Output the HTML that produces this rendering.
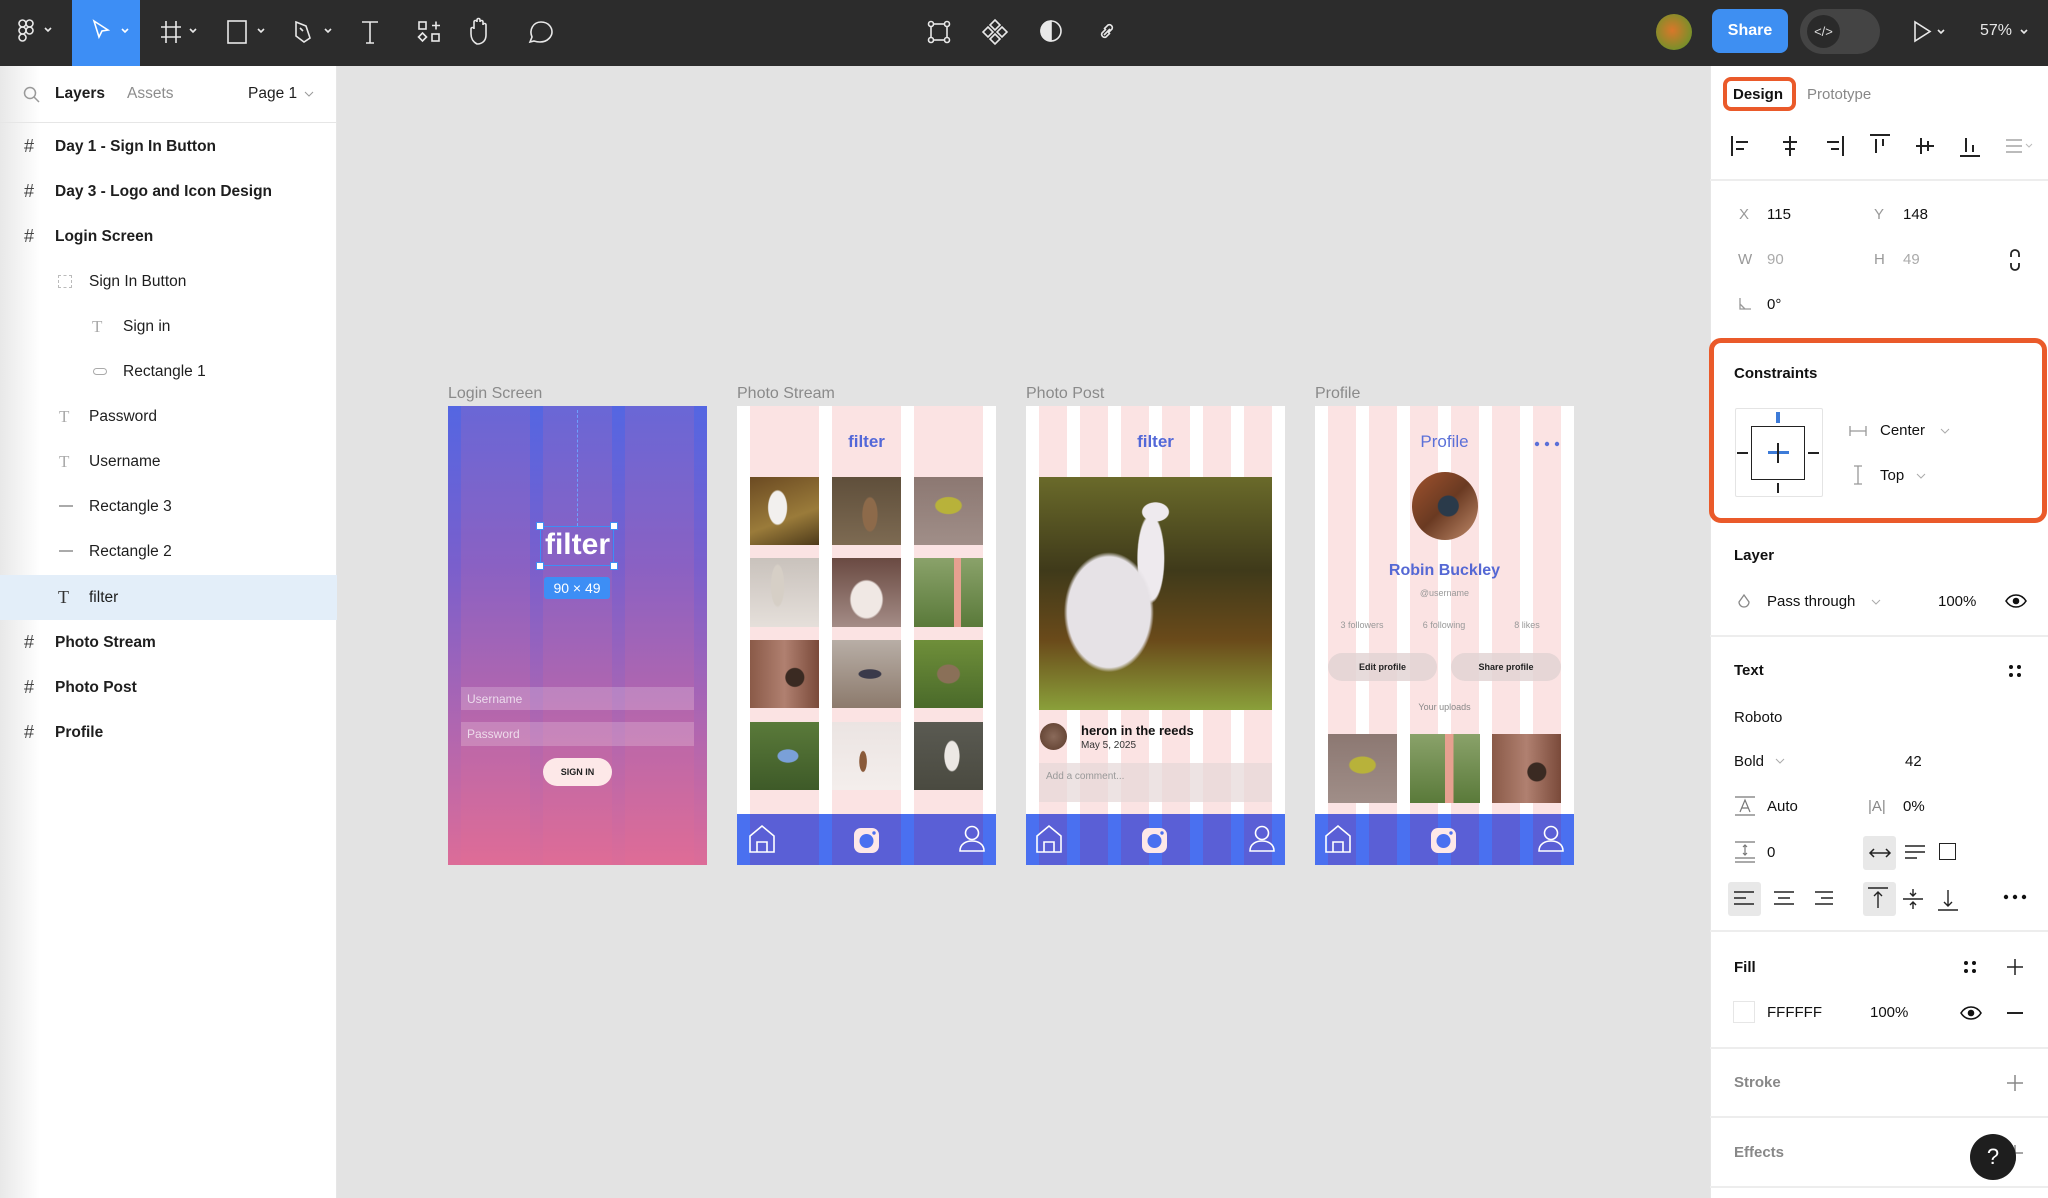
<!DOCTYPE html>
<html><head><meta charset="utf-8"><style>
*{box-sizing:border-box;margin:0;padding:0}
body{width:2048px;height:1198px;overflow:hidden;background:#e3e3e3;font-family:"Liberation Sans",sans-serif;position:relative}
.a{position:absolute}
.tb{left:0;top:0;width:2048px;height:66px;background:#2c2c2c}
.lp{left:0;top:66px;width:337px;height:1132px;background:#fff;border-right:1px solid #e6e6e6}
.lp .sh{left:0;top:0;width:40px;height:1132px;background:linear-gradient(90deg,#e8e8e8,#fff)}
.row{position:absolute;left:0;width:337px;height:45px;font-size:15.5px;color:#1e1e1e;line-height:45px}
.row b{font-weight:700}
.rp{left:1710px;top:66px;width:338px;height:1132px;background:#fff;border-left:1px solid #e6e6e6}
.t{position:absolute;white-space:nowrap;line-height:1}
.div{position:absolute;left:1710px;width:338px;height:2px;background:#ededed}
.flabel{position:absolute;top:385px;font-size:16px;color:#8a8a8a}
.frame{position:absolute;top:406px;width:259px;height:459px;background:#fff;overflow:hidden}
.col{position:absolute;top:0;height:459px;background:#fbe3e3}
.nav{position:absolute;left:0;top:408px;width:259px;height:51px;background:#4a70f0}
.ncol{position:absolute;top:0;height:51px;background:#5a5fd6}
.ph{position:absolute;overflow:hidden}
.fl{position:absolute;font-weight:700;color:#5368d8;font-size:17px}
</style></head><body>

<div class="a tb"></div>
<div class="a" style="left:72px;top:0;width:68px;height:66px;background:#3d8ef5"></div>
<svg class="a" style="left:0;top:0" width="2048" height="66" fill="none" stroke="#e8e8e8" stroke-width="1.6">
 <g transform="translate(19,20)"><rect x="0" y="0" width="7" height="7" rx="3.5"/><rect x="7" y="0" width="7" height="7" rx="3.5"/><rect x="0" y="7" width="7" height="7" rx="3.5"/><circle cx="10.5" cy="10.5" r="3.5"/><rect x="0" y="14" width="7" height="7" rx="3.5"/></g>
 <path d="M45 28l3 3 3-3"/>
 <path d="M94 21l14 9-6 1-3 6z" stroke="#fff"/><path d="M122 29l3 3 3-3" stroke="#fff"/>
 <path d="M166 21v22M176 21v22M161 27h20M161 37h20"/><path d="M190 29l3 3 3-3"/>
 <rect x="228" y="21" width="18" height="22"/><path d="M258 29l3 3 3-3"/>
 <path d="M296 22l10 4 4 12-6 4-8-6z M300 28l3 3"/><path d="M325 29l3 3 3-3"/>
 <path d="M362 22h16M370 22v21M366 43h8"/>
 <rect x="419" y="22" width="7" height="7"/><path d="M432 25.5h8M436 21.5v8"/><path d="M422.5 33l4 4-4 4-4-4z"/><rect x="432" y="34" width="7" height="7"/>
 <path d="M477 44c-4-2-6-6-6-10v-5c0-2 3-2 3 0v-7c0-2 3-2 3 0v-2c0-2 3-2 3 0v2c0-2 3-2 3 0v3c0-2 3-2 3 0v10c0 5-3 9-9 9z"/>
 <path d="M530 42l2-5c-3-7 1-15 9-15s11 6 11 10-4 10-12 10c-3 0-6-1-6-1z"/>
 <rect x="931" y="24" width="16" height="16"/><circle cx="931" cy="24" r="2.5" fill="#2c2c2c"/><circle cx="947" cy="24" r="2.5" fill="#2c2c2c"/><circle cx="931" cy="40" r="2.5" fill="#2c2c2c"/><circle cx="947" cy="40" r="2.5" fill="#2c2c2c"/>
 <path d="M995 20l5 5-5 5-5-5zM988 27l5 5-5 5-5-5zM1002 27l5 5-5 5-5-5zM995 34l5 5-5 5-5-5z"/>
 <circle cx="1051" cy="31" r="10"/><path d="M1051 21a10 10 0 0 0 0 20z" fill="#e8e8e8"/>
 <path d="M1106 29l-4 4a3 3 0 0 0 4 4l4-4M1108 33l4-4a3 3 0 0 0-4-4l-4 4M1104 35l6-6"/>
 <path d="M1915 22v19l15-9.5z"/><path d="M1938 30l3 3 3-3"/>
 <path d="M2021 30l3 3 3-3"/>
</svg>
<div class="a" style="left:1656px;top:14px;width:36px;height:36px;border-radius:50%;background:radial-gradient(circle at 45% 45%,#d9772a,#7a8f2a 70%,#3d5a1e)"></div>
<div class="a" style="left:1712px;top:9px;width:76px;height:44px;border-radius:8px;background:#3e8ff2;color:#fff;font-weight:700;font-size:16px;line-height:44px;text-align:center">Share</div>
<div class="a" style="left:1800px;top:9px;width:80px;height:45px;border-radius:23px;background:#444"></div>
<div class="a" style="left:1807px;top:15px;width:33px;height:33px;border-radius:50%;background:#2a2a2a;color:#ddd;font-size:13px;line-height:33px;text-align:center">&lt;/&gt;</div>
<div class="t" style="left:1980px;top:23px;color:#e8e8e8;font-size:16px">57%</div>

<div class="a lp"><div class="a sh"></div></div>
<svg class="a" style="left:23px;top:86px" width="18" height="18" fill="none" stroke="#999" stroke-width="1.5"><circle cx="7" cy="7" r="5.5"/><path d="M11 11l5 5"/></svg>
<div class="t" style="left:55px;top:86px;font-size:15.5px;font-weight:700;color:#1e1e1e">Layers</div>
<div class="t" style="left:127px;top:86px;font-size:15.5px;color:#8c8c8c">Assets</div>
<div class="t" style="left:248px;top:86px;font-size:15.5px;color:#1e1e1e">Page 1</div>
<svg class="a" style="left:304px;top:90px" width="10" height="8" fill="none" stroke="#999"><path d="M1 2l4 4 4-4"/></svg>
<div class="a" style="left:0;top:122px;width:337px;height:1px;background:#e6e6e6"></div>

<div class="a" style="left:0;top:575px;width:337px;height:45px;background:#e3eef9"></div>
<div class="row" style="top:124px"><span class="a" style="left:24px;color:#444;font-size:18px">#</span><b class="a" style="left:55px">Day 1 - Sign In Button</b></div>
<div class="row" style="top:169px"><span class="a" style="left:24px;color:#444;font-size:18px">#</span><b class="a" style="left:55px">Day 3 - Logo and Icon Design</b></div>
<div class="row" style="top:214px"><span class="a" style="left:24px;color:#444;font-size:18px">#</span><b class="a" style="left:55px">Login Screen</b></div>
<div class="row" style="top:259px"><span class="a" style="left:58px;top:16px;width:14px;height:13px;border:1px dashed #bbb"></span><span class="a" style="left:89px">Sign In Button</span></div>
<div class="row" style="top:304px"><span class="a" style="left:92px;color:#aaa;font-family:'Liberation Serif',serif;font-size:17px">T</span><span class="a" style="left:123px">Sign in</span></div>
<div class="row" style="top:349px"><span class="a" style="left:93px;top:19px;width:14px;height:7px;border:1.5px solid #aaa;border-radius:4px"></span><span class="a" style="left:123px">Rectangle 1</span></div>
<div class="row" style="top:394px"><span class="a" style="left:59px;color:#aaa;font-family:'Liberation Serif',serif;font-size:17px">T</span><span class="a" style="left:89px">Password</span></div>
<div class="row" style="top:439px"><span class="a" style="left:59px;color:#aaa;font-family:'Liberation Serif',serif;font-size:17px">T</span><span class="a" style="left:89px">Username</span></div>
<div class="row" style="top:484px"><span class="a" style="left:59px;top:21px;width:14px;height:2px;background:#aaa"></span><span class="a" style="left:89px">Rectangle 3</span></div>
<div class="row" style="top:529px"><span class="a" style="left:59px;top:21px;width:14px;height:2px;background:#aaa"></span><span class="a" style="left:89px">Rectangle 2</span></div>
<div class="row" style="top:575px"><span class="a" style="left:58px;color:#333;font-family:'Liberation Serif',serif;font-size:18px">T</span><span class="a" style="left:89px">filter</span></div>
<div class="row" style="top:620px"><span class="a" style="left:24px;color:#444;font-size:18px">#</span><b class="a" style="left:55px">Photo Stream</b></div>
<div class="row" style="top:665px"><span class="a" style="left:24px;color:#444;font-size:18px">#</span><b class="a" style="left:55px">Photo Post</b></div>
<div class="row" style="top:710px"><span class="a" style="left:24px;color:#444;font-size:18px">#</span><b class="a" style="left:55px">Profile</b></div>

<div class="flabel" style="left:448px">Login Screen</div>
<div class="flabel" style="left:737px">Photo Stream</div>
<div class="flabel" style="left:1026px">Photo Post</div>
<div class="flabel" style="left:1315px">Profile</div>

<div class="frame" style="left:448px;background:linear-gradient(180deg,#5466e2 0%,#7a5fcc 35%,#b066b0 70%,#dc6c98 100%)">
 <div class="col" style="left:13px;width:69px;background:rgba(240,110,140,.14)"></div>
 <div class="col" style="left:95px;width:69px;background:rgba(240,110,140,.14)"></div>
 <div class="col" style="left:177px;width:69px;background:rgba(240,110,140,.14)"></div>
 <div class="a" style="left:129px;top:4px;height:116px;border-left:1px dashed #6ea0ff"></div>
 <div class="a" style="left:92px;top:120px;width:74px;height:40px;border:1.5px solid #3d8ef5"></div>
 <div class="a" style="left:88px;top:116px;width:8px;height:8px;background:#fff;border:1px solid #3d8ef5"></div>
 <div class="a" style="left:162px;top:116px;width:8px;height:8px;background:#fff;border:1px solid #3d8ef5"></div>
 <div class="a" style="left:88px;top:156px;width:8px;height:8px;background:#fff;border:1px solid #3d8ef5"></div>
 <div class="a" style="left:162px;top:156px;width:8px;height:8px;background:#fff;border:1px solid #3d8ef5"></div>
 <div class="t" style="left:0;width:259px;text-align:center;top:124px;color:#fff;font-weight:700;font-size:30px">filter</div>
 <div class="a" style="left:96px;top:171px;width:66px;height:22px;background:#3d8ef5;border-radius:3px;color:#fff;font-size:14px;line-height:22px;text-align:center">90 × 49</div>
 <div class="a" style="left:13px;top:281px;width:233px;height:23px;background:rgba(255,255,255,.2)"></div>
 <div class="t" style="left:19px;top:287px;color:rgba(255,255,255,.7);font-size:12px">Username</div>
 <div class="a" style="left:13px;top:316px;width:233px;height:24px;background:rgba(255,255,255,.2)"></div>
 <div class="t" style="left:19px;top:322px;color:rgba(255,255,255,.7);font-size:12px">Password</div>
 <div class="a" style="left:95px;top:352px;width:69px;height:28px;border-radius:14px;background:#fde8e8;color:#222;font-weight:700;font-size:9px;line-height:28px;text-align:center">SIGN IN</div>
</div>

<div class="frame" style="left:737px">
 <div class="col" style="left:13px;width:69px"></div><div class="col" style="left:95px;width:69px"></div><div class="col" style="left:177px;width:69px"></div>
 <div class="fl" style="left:0;width:259px;text-align:center;top:26px">filter</div>
 <div class="ph" style="left:13px;top:71px;width:69px;height:68px;background:radial-gradient(ellipse 10px 18px at 40% 45%,#f2f0ee 90%,transparent),linear-gradient(160deg,#6b4a22,#9a7b3a 60%,#4d3a1a)"></div>
 <div class="ph" style="left:95px;top:71px;width:69px;height:68px;background:radial-gradient(ellipse 8px 18px at 55% 55%,#8d6a4a 90%,transparent),linear-gradient(#5f4f3b,#7d6a52)"></div>
 <div class="ph" style="left:177px;top:71px;width:69px;height:68px;background:radial-gradient(ellipse 14px 9px at 50% 42%,#b8b23a 90%,transparent),linear-gradient(#8c7872,#a08e88)"></div>
 <div class="ph" style="left:13px;top:152px;width:69px;height:69px;background:radial-gradient(ellipse 7px 22px at 40% 40%,#d6cfc6 90%,transparent),linear-gradient(#c9c2bc,#e5dfda)"></div>
 <div class="ph" style="left:95px;top:152px;width:69px;height:69px;background:radial-gradient(ellipse 17px 20px at 50% 60%,#f0e8e4 90%,transparent),linear-gradient(#6a4a42,#a48c86)"></div>
 <div class="ph" style="left:177px;top:152px;width:69px;height:69px;background:linear-gradient(90deg,transparent 58%,#e6a090 58%,#e6a090 68%,transparent 68%),linear-gradient(#8aa26a,#5a7a3a)"></div>
 <div class="ph" style="left:13px;top:234px;width:69px;height:68px;background:radial-gradient(circle at 65% 55%,#3a2a22 9px,transparent 10px),linear-gradient(90deg,#8a5a48,#b08070,#7a4a3a)"></div>
 <div class="ph" style="left:95px;top:234px;width:69px;height:68px;background:radial-gradient(ellipse 12px 5px at 55% 50%,#3a3a4a 90%,transparent),linear-gradient(#b8aea6,#8c7a6c)"></div>
 <div class="ph" style="left:177px;top:234px;width:69px;height:68px;background:radial-gradient(ellipse 12px 10px at 50% 50%,#8a7058 90%,transparent),linear-gradient(#6f8f3a,#4a6a2a)"></div>
 <div class="ph" style="left:13px;top:316px;width:69px;height:68px;background:radial-gradient(ellipse 11px 7px at 55% 50%,#7aa0d8 90%,transparent),linear-gradient(#5a7a3a,#3e5a28)"></div>
 <div class="ph" style="left:95px;top:316px;width:69px;height:68px;background:radial-gradient(ellipse 4px 11px at 45% 58%,#8a5a3a 90%,transparent),linear-gradient(#ebe4e2,#f4eeec)"></div>
 <div class="ph" style="left:177px;top:316px;width:69px;height:68px;background:radial-gradient(ellipse 8px 16px at 55% 50%,#ece8e4 90%,transparent),linear-gradient(#5a5a52,#4a4a40)"></div>
 <div class="nav"><div class="ncol" style="left:13px;width:69px"></div><div class="ncol" style="left:95px;width:69px"></div><div class="ncol" style="left:177px;width:69px"></div>
  <svg class="a" style="left:0;top:0" width="259" height="51" fill="none" stroke="#fff" stroke-width="1.6"><path d="M13 22l12-10 12 10v16H13zM20 38v-10h10v10"/><rect x="117" y="14" width="25" height="25" rx="7" fill="#fde8e8" stroke="none"/><circle cx="129.5" cy="27" r="7" fill="#4a70f0" stroke="none"/><circle cx="137" cy="19" r="1.7" fill="#4a70f0" stroke="none"/><circle cx="235" cy="19" r="6.5"/><path d="M223 37c0-7 6-10 12-10s12 3 12 10z"/></svg></div>
</div>

<div class="frame" style="left:1026px">
 <div class="col" style="left:13px;width:28px"></div><div class="col" style="left:54px;width:28px"></div><div class="col" style="left:95px;width:28px"></div><div class="col" style="left:136px;width:28px"></div><div class="col" style="left:177px;width:28px"></div><div class="col" style="left:218px;width:28px"></div>
 <div class="fl" style="left:0;width:259px;text-align:center;top:26px">filter</div>
 <div class="ph" style="left:13px;top:71px;width:233px;height:233px;background:radial-gradient(ellipse 45px 60px at 30% 58%,#e6e2e6 92%,transparent),radial-gradient(ellipse 14px 45px at 48% 35%,#eeeaee 92%,transparent),radial-gradient(ellipse 14px 10px at 50% 15%,#eeeaee 92%,transparent),linear-gradient(180deg,#6a6a2a 0%,#3f3a1a 40%,#6a4a1a 70%,#8aa03a 100%)"></div>
 <div class="a" style="left:14px;top:317px;width:27px;height:27px;border-radius:50%;background:radial-gradient(circle,#8a6a5a,#5a3a2a)"></div>
 <div class="t" style="left:55px;top:318px;font-weight:700;font-size:13px;color:#111">heron in the reeds</div>
 <div class="t" style="left:55px;top:335px;font-size:10px;color:#333">May 5, 2025</div>
 <div class="a" style="left:13px;top:357px;width:233px;height:39px;background:rgba(230,215,215,.7)"></div>
 <div class="t" style="left:20px;top:366px;font-size:10px;color:#999">Add a comment...</div>
 <div class="nav"><div class="ncol" style="left:13px;width:28px"></div><div class="ncol" style="left:54px;width:28px"></div><div class="ncol" style="left:95px;width:28px"></div><div class="ncol" style="left:136px;width:28px"></div><div class="ncol" style="left:177px;width:28px"></div><div class="ncol" style="left:218px;width:28px"></div>
  <svg class="a" style="left:0;top:0" width="259" height="51" fill="none" stroke="#fff" stroke-width="1.6"><path d="M11 22l12-10 12 10v16H11zM18 38v-10h10v10"/><rect x="116" y="14" width="25" height="25" rx="7" fill="#fde8e8" stroke="none"/><circle cx="128.5" cy="27" r="7" fill="#4a70f0" stroke="none"/><circle cx="136" cy="19" r="1.7" fill="#4a70f0" stroke="none"/><circle cx="236" cy="19" r="6.5"/><path d="M224 37c0-7 6-10 12-10s12 3 12 10z"/></svg></div>
</div>

<div class="frame" style="left:1315px">
 <div class="col" style="left:13px;width:28px"></div><div class="col" style="left:54px;width:28px"></div><div class="col" style="left:95px;width:28px"></div><div class="col" style="left:136px;width:28px"></div><div class="col" style="left:177px;width:28px"></div><div class="col" style="left:218px;width:28px"></div>
 <div class="t" style="left:0;width:259px;text-align:center;top:27px;color:#5b70d8;font-size:17px">Profile</div>
 <svg class="a" style="left:219px;top:35px" width="26" height="6" fill="#5b70d8"><circle cx="3" cy="3" r="2.2"/><circle cx="13" cy="3" r="2.2"/><circle cx="23" cy="3" r="2.2"/></svg>
 <div class="a" style="left:97px;top:66px;width:66px;height:68px;border-radius:50%;background:radial-gradient(circle at 55% 50%,#2a3a4a 10px,transparent 11px),linear-gradient(135deg,#a0522d,#6a3a22 50%,#c08a6a)"></div>
 <div class="t" style="left:0;width:259px;text-align:center;top:157px;color:#5568d4;font-weight:700;font-size:16px">Robin Buckley</div>
 <div class="t" style="left:0;width:259px;text-align:center;top:183px;color:#999;font-size:9px">@username</div>
 <div class="t" style="left:15px;width:64px;text-align:center;top:215px;color:#999;font-size:9px">3 followers</div>
 <div class="t" style="left:97px;width:64px;text-align:center;top:215px;color:#999;font-size:9px">6 following</div>
 <div class="t" style="left:180px;width:64px;text-align:center;top:215px;color:#999;font-size:9px">8 likes</div>
 <div class="a" style="left:13px;top:247px;width:109px;height:28px;border-radius:14px;background:rgba(225,210,210,.8);color:#222;font-weight:700;font-size:9px;line-height:28px;text-align:center">Edit profile</div>
 <div class="a" style="left:136px;top:247px;width:110px;height:28px;border-radius:14px;background:rgba(225,210,210,.8);color:#222;font-weight:700;font-size:9px;line-height:28px;text-align:center">Share profile</div>
 <div class="t" style="left:0;width:259px;text-align:center;top:297px;color:#888;font-size:9px">Your uploads</div>
 <div class="ph" style="left:13px;top:328px;width:69px;height:69px;background:radial-gradient(ellipse 14px 9px at 50% 45%,#b8b23a 90%,transparent),linear-gradient(#8c7872,#a08e88)"></div>
 <div class="ph" style="left:95px;top:328px;width:70px;height:69px;background:linear-gradient(90deg,transparent 50%,#e6a090 50%,#e6a090 62%,transparent 62%),linear-gradient(#8aa26a,#5a7a3a)"></div>
 <div class="ph" style="left:177px;top:328px;width:69px;height:69px;background:radial-gradient(circle at 65% 55%,#3a2a22 9px,transparent 10px),linear-gradient(90deg,#8a5a48,#b08070,#7a4a3a)"></div>
 <div class="nav"><div class="ncol" style="left:13px;width:28px"></div><div class="ncol" style="left:54px;width:28px"></div><div class="ncol" style="left:95px;width:28px"></div><div class="ncol" style="left:136px;width:28px"></div><div class="ncol" style="left:177px;width:28px"></div><div class="ncol" style="left:218px;width:28px"></div>
  <svg class="a" style="left:0;top:0" width="259" height="51" fill="none" stroke="#fff" stroke-width="1.6"><path d="M11 22l12-10 12 10v16H11zM18 38v-10h10v10"/><rect x="116" y="14" width="25" height="25" rx="7" fill="#fde8e8" stroke="none"/><circle cx="128.5" cy="27" r="7" fill="#4a70f0" stroke="none"/><circle cx="136" cy="19" r="1.7" fill="#4a70f0" stroke="none"/><circle cx="236" cy="19" r="6.5"/><path d="M224 37c0-7 6-10 12-10s12 3 12 10z"/></svg></div>
</div>

<div class="a rp"></div>
<div class="a" style="left:1723px;top:77px;width:73px;height:34px;border:4px solid #ea5a2a;border-radius:8px"></div>
<div class="t" style="left:1733px;top:87px;font-weight:700;font-size:15px;color:#111">Design</div>
<div class="t" style="left:1807px;top:87px;font-size:15px;color:#888">Prototype</div>
<svg class="a" style="left:1730px;top:132px" width="318" height="28" fill="none" stroke="#222" stroke-width="2">
 <path d="M2 4v20M6 10h12M6 17h8"/>
 <path d="M60 4v20M53 10h14M55 17h10"/>
 <path d="M113 4v20M97 10h12M101 17h8"/>
 <path d="M140 3h20M146 7v14M153 7v7"/>
 <path d="M186 14h18M191 6v16M198 9v10"/>
 <path d="M230 24h20M236 6v14M243 13v7"/>
 <path d="M276 8h16M276 14h16M276 20h16" stroke="#bbb"/><path d="M296 12l3 3 3-3" stroke="#bbb" stroke-width="1"/>
</svg>
<div class="div" style="top:179px"></div>
<div class="t" style="left:1739px;top:207px;font-size:15px;color:#999">X</div><div class="t" style="left:1767px;top:207px;font-size:15px;color:#111">115</div>
<div class="t" style="left:1874px;top:207px;font-size:15px;color:#999">Y</div><div class="t" style="left:1903px;top:207px;font-size:15px;color:#111">148</div>
<div class="t" style="left:1738px;top:252px;font-size:15px;color:#999">W</div><div class="t" style="left:1767px;top:252px;font-size:15px;color:#aaa">90</div>
<div class="t" style="left:1874px;top:252px;font-size:15px;color:#999">H</div><div class="t" style="left:1903px;top:252px;font-size:15px;color:#aaa">49</div>
<svg class="a" style="left:2008px;top:248px" width="14" height="24" fill="none" stroke="#222" stroke-width="1.8"><path d="M3 9V6a4 4 0 0 1 8 0v3M3 15v3a4 4 0 0 0 8 0v-3"/></svg>
<svg class="a" style="left:1738px;top:297px" width="14" height="14" fill="none" stroke="#999" stroke-width="1.3"><path d="M2 1v11h11M2 7l5 5"/></svg>
<div class="t" style="left:1767px;top:297px;font-size:15px;color:#111">0°</div>

<div class="a" style="left:1709px;top:338px;width:338px;height:185px;border:5px solid #ea5a2a;border-radius:12px"></div>
<div class="t" style="left:1734px;top:366px;font-size:15px;font-weight:700;color:#111">Constraints</div>
<div class="a" style="left:1735px;top:408px;width:88px;height:89px;border:1px solid #e4e4e4;border-radius:2px"></div>
<div class="a" style="left:1751px;top:426px;width:54px;height:54px;border:1.5px solid #222"></div>
<div class="a" style="left:1768px;top:451px;width:21px;height:3px;background:#3d7bd8"></div>
<div class="a" style="left:1777px;top:443px;width:2px;height:20px;background:#222"></div>
<div class="a" style="left:1776px;top:412px;width:4px;height:11px;background:#3d7bd8"></div>
<div class="a" style="left:1737px;top:452px;width:11px;height:1.5px;background:#222"></div>
<div class="a" style="left:1808px;top:452px;width:11px;height:1.5px;background:#222"></div>
<div class="a" style="left:1777px;top:483px;width:1.5px;height:10px;background:#222"></div>
<svg class="a" style="left:1849px;top:424px" width="18" height="14" fill="none" stroke="#999" stroke-width="1.3"><path d="M1 2v10M17 2v10M1 7h16"/></svg>
<div class="t" style="left:1880px;top:423px;font-size:15px;color:#111">Center</div>
<svg class="a" style="left:1940px;top:427px" width="10" height="8" fill="none" stroke="#aaa"><path d="M1 2l4 4 4-4"/></svg>
<svg class="a" style="left:1852px;top:465px" width="12" height="20" fill="none" stroke="#999" stroke-width="1.3"><path d="M2 1h8M2 19h8M6 1v18"/></svg>
<div class="t" style="left:1880px;top:468px;font-size:15px;color:#111">Top</div>
<svg class="a" style="left:1916px;top:472px" width="10" height="8" fill="none" stroke="#aaa"><path d="M1 2l4 4 4-4"/></svg>

<div class="t" style="left:1734px;top:548px;font-size:15px;font-weight:700;color:#111">Layer</div>
<svg class="a" style="left:1737px;top:594px" width="14" height="16" fill="none" stroke="#888" stroke-width="1.3"><path d="M7 1l5 7a5 5 0 0 1-10 0z"/></svg>
<div class="t" style="left:1767px;top:594px;font-size:15px;color:#111">Pass through</div>
<svg class="a" style="left:1871px;top:598px" width="10" height="8" fill="none" stroke="#aaa"><path d="M1 2l4 4 4-4"/></svg>
<div class="t" style="left:1938px;top:594px;font-size:15px;color:#111">100%</div>
<svg class="a" style="left:2005px;top:593px" width="22" height="16" fill="none" stroke="#111" stroke-width="1.6"><path d="M1 8c5-8 15-8 20 0c-5 8-15 8-20 0z"/><circle cx="11" cy="8" r="2.5" fill="#111"/></svg>
<div class="div" style="top:635px"></div>

<div class="t" style="left:1734px;top:663px;font-size:15px;font-weight:700;color:#111">Text</div>
<svg class="a" style="left:2007px;top:663px" width="16" height="16" fill="#111"><circle cx="4" cy="4" r="2"/><circle cx="12" cy="4" r="2"/><circle cx="4" cy="12" r="2"/><circle cx="12" cy="12" r="2"/></svg>
<div class="t" style="left:1734px;top:710px;font-size:15px;color:#111">Roboto</div>
<div class="t" style="left:1734px;top:754px;font-size:15px;color:#111">Bold</div>
<svg class="a" style="left:1775px;top:757px" width="10" height="8" fill="none" stroke="#aaa"><path d="M1 2l4 4 4-4"/></svg>
<div class="t" style="left:1905px;top:754px;font-size:15px;color:#111">42</div>
<svg class="a" style="left:1734px;top:795px" width="22" height="22" fill="none" stroke="#777" stroke-width="1.2"><path d="M1 2h20M1 20h20M6 17l5-12 5 12M8 13h6"/></svg>
<div class="t" style="left:1767px;top:799px;font-size:15px;color:#111">Auto</div>
<div class="t" style="left:1868px;top:799px;font-size:15px;color:#888">|A|</div>
<div class="t" style="left:1903px;top:799px;font-size:15px;color:#111">0%</div>
<svg class="a" style="left:1734px;top:840px" width="22" height="24" fill="none" stroke="#777" stroke-width="1.2"><path d="M1 2h20M1 18h20M1 22h20M11 5v10M9 7l2-2 2 2M9 13l2 2 2-2"/></svg>
<div class="t" style="left:1767px;top:845px;font-size:15px;color:#111">0</div>
<div class="a" style="left:1863px;top:836px;width:33px;height:34px;background:#e8e8e8;border-radius:3px"></div>
<svg class="a" style="left:1868px;top:845px" width="24" height="16" fill="none" stroke="#222" stroke-width="1.5"><path d="M2 8h20M6 4L2 8l4 4M18 4l4 4-4 4"/></svg>
<svg class="a" style="left:1904px;top:843px" width="22" height="18" fill="none" stroke="#222" stroke-width="1.4"><path d="M1 3h20M1 9h20M1 15h12"/></svg>
<div class="a" style="left:1939px;top:843px;width:17px;height:17px;border:1.6px solid #222"></div>
<div class="a" style="left:1728px;top:882px;width:33px;height:34px;background:#e8e8e8;border-radius:3px"></div>
<svg class="a" style="left:1733px;top:889px" width="100" height="20" fill="none" stroke="#222" stroke-width="1.4"><path d="M1 3h20M1 9h12M1 15h20M41 3h20M45 9h12M41 15h20M82 3h18M88 9h12M82 15h18"/></svg>
<div class="a" style="left:1863px;top:882px;width:33px;height:34px;background:#e8e8e8;border-radius:3px"></div>
<svg class="a" style="left:1865px;top:884px" width="100" height="30" fill="none" stroke="#222" stroke-width="1.4"><path d="M3 4h20M13 8v16M9 12l4-4 4 4"/><path d="M38 15h20M48 5v7M45 9l3 3 3-3M48 25v-7M45 21l3-3 3 3"/><path d="M73 26h20M83 6v16M79 18l4 4 4-4"/></svg>
<svg class="a" style="left:2003px;top:893px" width="24" height="8" fill="#111"><circle cx="3" cy="4" r="2.2"/><circle cx="12" cy="4" r="2.2"/><circle cx="21" cy="4" r="2.2"/></svg>
<div class="div" style="top:930px"></div>

<div class="t" style="left:1734px;top:960px;font-size:15px;font-weight:700;color:#111">Fill</div>
<svg class="a" style="left:1962px;top:959px" width="16" height="16" fill="#111"><circle cx="4" cy="4" r="2"/><circle cx="12" cy="4" r="2"/><circle cx="4" cy="12" r="2"/><circle cx="12" cy="12" r="2"/></svg>
<svg class="a" style="left:2006px;top:958px" width="18" height="18" fill="none" stroke="#222" stroke-width="1.5"><path d="M9 1v16M1 9h16"/></svg>
<div class="a" style="left:1733px;top:1001px;width:22px;height:22px;border:1px solid #e6e6e6;background:#fff"></div>
<div class="t" style="left:1767px;top:1005px;font-size:15px;color:#111">FFFFFF</div>
<div class="t" style="left:1870px;top:1005px;font-size:15px;color:#111">100%</div>
<svg class="a" style="left:1960px;top:1005px" width="22" height="16" fill="none" stroke="#111" stroke-width="1.6"><path d="M1 8c5-8 15-8 20 0c-5 8-15 8-20 0z"/><circle cx="11" cy="8" r="2.5" fill="#111"/></svg>
<div class="a" style="left:2007px;top:1012px;width:16px;height:1.5px;background:#222"></div>
<div class="div" style="top:1047px"></div>
<div class="t" style="left:1734px;top:1075px;font-size:15px;font-weight:700;color:#888">Stroke</div>
<svg class="a" style="left:2006px;top:1074px" width="18" height="18" fill="none" stroke="#888" stroke-width="1.5"><path d="M9 1v16M1 9h16"/></svg>
<div class="div" style="top:1116px"></div>
<div class="t" style="left:1734px;top:1145px;font-size:15px;font-weight:700;color:#888">Effects</div>
<svg class="a" style="left:2006px;top:1144px" width="18" height="18" fill="none" stroke="#888" stroke-width="1.5"><path d="M9 1v16M1 9h16"/></svg>
<div class="div" style="top:1186px"></div>
<div class="a" style="left:1970px;top:1134px;width:46px;height:46px;border-radius:50%;background:#1e1e1e;color:#fff;font-size:22px;line-height:46px;text-align:center">?</div>
</body></html>
